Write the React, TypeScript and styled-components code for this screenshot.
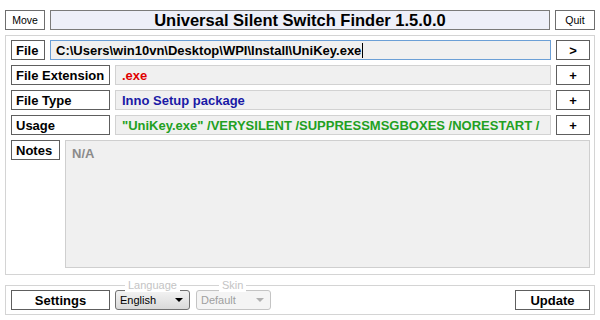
import styled, { createGlobalStyle } from 'styled-components';

const GlobalStyle = createGlobalStyle`
  body {
    margin: 0;
    background: #ffffff;
    font-family: 'Liberation Sans', Arial, sans-serif;
  }
`;

const Window = styled.div`
  width: 600px;
  height: 320px;
  box-sizing: border-box;
  padding: 10px 5px 0;
  display: flex;
  flex-direction: column;
`;

const TopBar = styled.div`
  display: flex;
  gap: 5px;
  height: 20px;
`;

const SmallButton = styled.div`
  width: 40px;
  box-sizing: border-box;
  border: 1px solid #6e6e6e;
  background: #ffffff;
  font-size: 10.5px;
  color: #000;
  display: flex;
  align-items: center;
  justify-content: center;
`;

const TitleBox = styled.div`
  flex: 1;
  box-sizing: border-box;
  border: 1px solid #7a7a7a;
  background: #edeff9;
  font-size: 16.5px;
  font-weight: bold;
  color: #000;
  display: flex;
  align-items: center;
  justify-content: center;
`;

const Panel = styled.div<{ $height: number; $gap: number }>`
  position: relative;
  height: ${({ $height }) => $height}px;
  margin-top: ${({ $gap }) => $gap}px;
  box-sizing: border-box;
  border: 1px solid #d4d4d4;
  padding: 4px 4px 6px 5px;
  display: flex;
  flex-direction: column;
  gap: 5px;
`;

const Row = styled.div<{ $grow?: boolean }>`
  display: flex;
  gap: 5px;
  height: ${({ $grow }) => ($grow ? 'auto' : '20px')};
  flex: ${({ $grow }) => ($grow ? 1 : 'none')};
  align-items: stretch;
`;

const Label = styled.div<{ $w: number }>`
  width: ${({ $w }) => $w}px;
  height: 20px;
  box-sizing: border-box;
  border: 1px solid #5e5e5e;
  background: #ffffff;
  padding-left: 4px;
  font-size: 13px;
  font-weight: bold;
  color: #000;
  display: flex;
  align-items: center;
  flex: none;
`;

const ValueBox = styled.div<{ $color: string; $focused?: boolean }>`
  flex: 1;
  box-sizing: border-box;
  border: 1px solid ${({ $focused }) => ($focused ? '#6b9fd6' : '#d2d2d2')};
  background: #f0f0f0;
  padding-left: ${({ $focused }) => ($focused ? 5 : 6)}px;
  font-size: 13px;
  font-weight: bold;
  color: ${({ $color }) => $color};
  display: flex;
  align-items: center;
  white-space: nowrap;
  overflow: hidden;
`;

const Caret = styled.span`
  display: inline-block;
  width: 1px;
  height: 15px;
  background: #000;
  margin-left: 1px;
`;

const ActionButton = styled.div`
  width: 34px;
  box-sizing: border-box;
  border: 1px solid #5e5e5e;
  background: #ffffff;
  font-size: 13px;
  font-weight: bold;
  color: #000;
  display: flex;
  align-items: center;
  justify-content: center;
`;

const NotesBox = styled.div`
  flex: 1;
  box-sizing: border-box;
  border: 1px solid #cfcfcf;
  background: #f0f0f0;
  padding: 5px 6px;
  font-size: 13px;
  font-weight: bold;
  color: #8b8b8b;
`;

const BottomBar = styled.div`
  position: relative;
  height: 30px;
  margin-top: 10px;
  box-sizing: border-box;
  border: 1px solid #d4d4d4;
  padding: 4px 4px 4px 5px;
  display: flex;
  align-items: stretch;
`;

const WideButton = styled.div<{ $w: number }>`
  width: ${({ $w }) => $w}px;
  box-sizing: border-box;
  border: 1px solid #5e5e5e;
  background: #ffffff;
  font-size: 13px;
  font-weight: bold;
  color: #000;
  display: flex;
  align-items: center;
  justify-content: center;
`;

const SelectBox = styled.div<{ $disabled?: boolean }>`
  width: 75px;
  margin-left: ${({ $disabled }) => ($disabled ? 6 : 5)}px;
  box-sizing: border-box;
  border: 1px solid ${({ $disabled }) => ($disabled ? '#c4c4c4' : '#707070')};
  border-radius: 3px;
  background: ${({ $disabled }) =>
    $disabled ? '#f4f4f4' : 'linear-gradient(#f2f2f2, #e6e6e6 50%, #d9d9d9)'};
  padding: 0 4px;
  font-size: 11px;
  color: ${({ $disabled }) => ($disabled ? '#9f9f9f' : '#000')};
  display: flex;
  align-items: center;
  justify-content: space-between;
`;

const Arrow = styled.span<{ $disabled?: boolean }>`
  width: 0;
  height: 0;
  margin-right: 2px;
  border-left: 4px solid transparent;
  border-right: 4px solid transparent;
  border-top: 4px solid ${({ $disabled }) => ($disabled ? '#b0b0b0' : '#000')};
`;

const Spacer = styled.div`
  flex: 1;
`;

const Legend = styled.span<{ $left: number }>`
  position: absolute;
  top: -8px;
  left: ${({ $left }) => $left}px;
  padding: 0 3px;
  background: #ffffff;
  font-size: 11px;
  line-height: 14px;
  color: #c4c4c4;
`;

const fields = [
  { label: 'File', w: 34, color: '#000', value: 'C:\\Users\\win10vn\\Desktop\\WPI\\Install\\UniKey.exe', action: '>', focused: true },
  { label: 'File Extension', w: 99, color: '#e00000', value: '.exe', action: '+' },
  { label: 'File Type', w: 99, color: '#1a1aa6', value: 'Inno Setup package', action: '+' },
  { label: 'Usage', w: 99, color: '#22a022', value: '"UniKey.exe" /VERYSILENT /SUPPRESSMSGBOXES /NORESTART /', action: '+' },
];

export default function App() {
  return (
    <>
      <GlobalStyle />
      <Window>
        <TopBar>
          <SmallButton>Move</SmallButton>
          <TitleBox>Universal Silent Switch Finder 1.5.0.0</TitleBox>
          <SmallButton>Quit</SmallButton>
        </TopBar>

        <Panel $height={240} $gap={5}>
          {fields.map((f) => (
            <Row key={f.label}>
              <Label $w={f.w}>{f.label}</Label>
              <ValueBox $color={f.color} $focused={f.focused}>
                {f.value}
                {f.focused && <Caret />}
              </ValueBox>
              <ActionButton>{f.action}</ActionButton>
            </Row>
          ))}
          <Row $grow>
            <Label $w={49}>Notes</Label>
            <NotesBox>N/A</NotesBox>
          </Row>
        </Panel>

        <BottomBar>
          <WideButton $w={99}>Settings</WideButton>
          <SelectBox>
            English
            <Arrow />
          </SelectBox>
          <SelectBox $disabled>
            Default
            <Arrow $disabled />
          </SelectBox>
          <Spacer />
          <WideButton $w={75}>Update</WideButton>
          <Legend $left={119}>Language</Legend>
          <Legend $left={213}>Skin</Legend>
        </BottomBar>
      </Window>
    </>
  );
}
